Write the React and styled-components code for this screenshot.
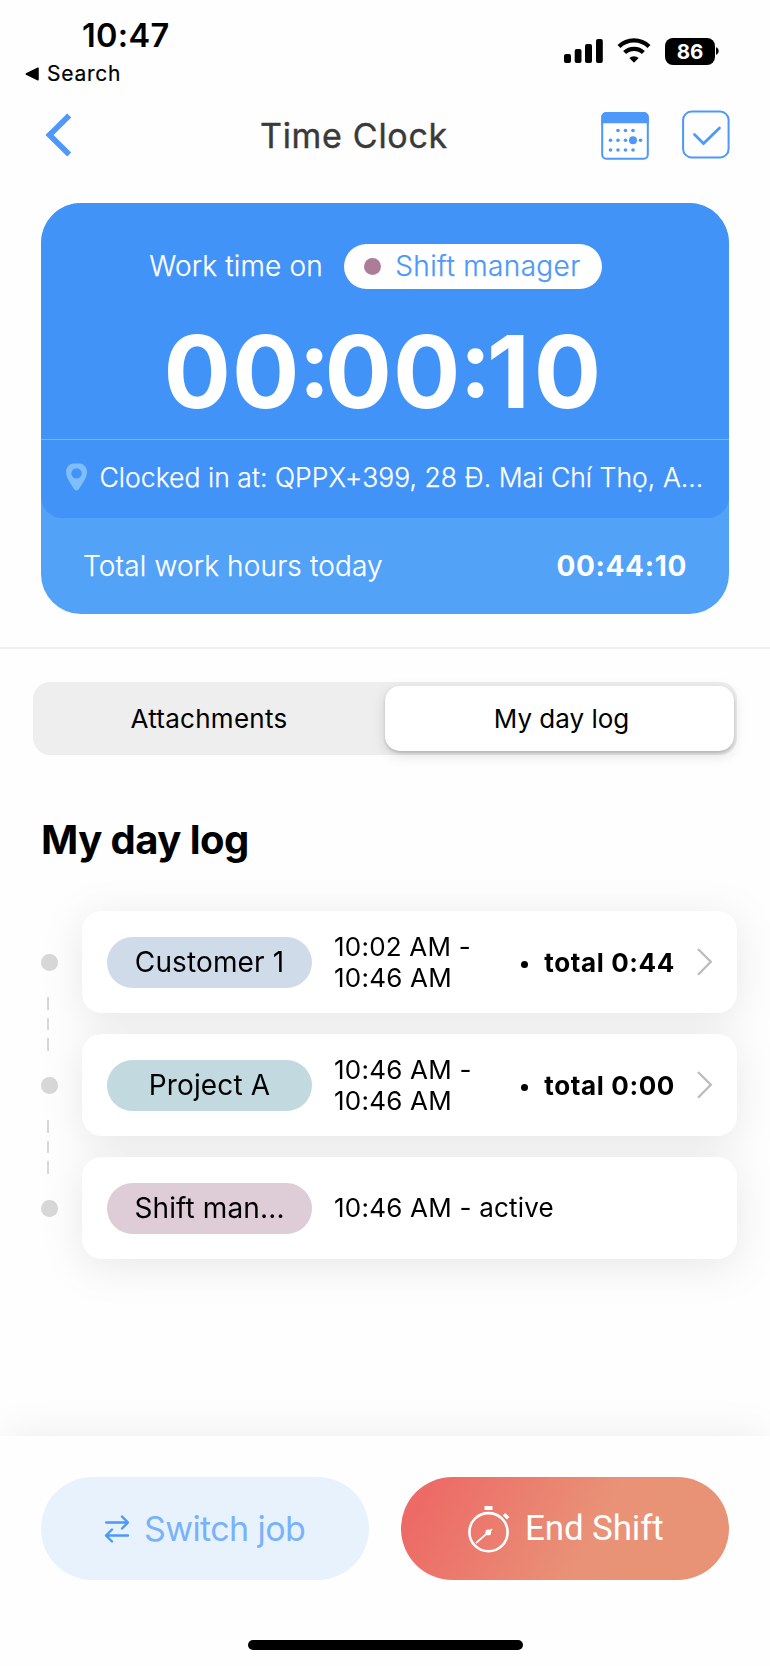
import React from "react";
import styled, { createGlobalStyle } from "styled-components";

const GlobalStyle = createGlobalStyle`
  *, *::before, *::after { box-sizing: border-box; }
  body {
    margin: 0;
    background: #fefefe;
    color: #000;
    font-family: Inter, "Liberation Sans", sans-serif;
    -webkit-font-smoothing: antialiased;
  }
  svg { display: block; flex: none; }
  button { font: inherit; border: 0; padding: 0; background: none; color: inherit; }
`;

const Screen = styled.div`
  width: 770px;
  height: 1666px;
  display: flex;
  flex-direction: column;
  overflow: hidden;
  white-space: nowrap;
`;

const StatusBar = styled.div`
  height: 96px;
  display: flex;
  justify-content: space-between;
  padding: 15px 51px 0 25px;
`;

const StatusLeft = styled.div`
  display: flex;
  flex-direction: column;
`;

const Clock = styled.div`
  padding-left: 57px;
  font-size: 32.5px;
  font-weight: 600;
  line-height: 41px;
  letter-spacing: 0.33px;
`;

const BackToApp = styled.div`
  display: flex;
  align-items: center;
  gap: 8px;
  margin-top: 3px;
  font-size: 21px;
  line-height: 29px;
  letter-spacing: 0.75px;
  -webkit-text-stroke: 0.2px currentColor;
`;

const StatusIcons = styled.div`
  display: flex;
  align-items: center;
  height: 28px;
  margin-top: 22px;
`;

const SignalIcon = styled.svg`
  margin-right: 14px;
`;

const Battery = styled.div`
  display: flex;
  align-items: center;
  margin-left: 14px;
`;

const BatteryLevel = styled.div`
  width: 50px;
  height: 27px;
  border-radius: 8px;
  background: #000;
  color: #fff;
  font-size: 20.5px;
  font-weight: 700;
  line-height: 28px;
  text-align: center;
`;

const Header = styled.header`
  height: 107px;
  padding: 14px 40px 0 45px;
  display: flex;
  align-items: flex-start;
`;

const BackButton = styled.button`
  width: 215px;
  height: 50px;
  display: flex;
  align-items: center;
`;

const Title = styled.h1`
  margin: 0 auto 0 0;
  color: #3a3a3a;
  font-size: 34px;
  font-weight: 400;
  line-height: 51px;
  letter-spacing: 0.7px;
  -webkit-text-stroke: 0.4px currentColor;
`;

const HeaderActions = styled.div`
  display: flex;
  gap: 33px;
`;

const ClockCard = styled.section`
  flex: none;
  margin: 0 41px;
  height: 411px;
  border-radius: 40px;
  overflow: hidden;
  background: #52a2f8;
  color: #fff;
`;

const CurrentShift = styled.div`
  height: 315px;
  border-radius: 0 0 21px 21px;
  background: #4293f7;
`;

const WorkTime = styled.div`
  height: 237px;
  padding-top: 41px;
  display: flex;
  flex-direction: column;
  align-items: center;
  border-bottom: 1px solid #78b4fa;
`;

const WorkLine = styled.div`
  display: flex;
  align-items: center;
  gap: 21px;
  padding-right: 19px;
  font-size: 28px;
  font-weight: 300;
  line-height: 45px;
  letter-spacing: 0.16px;
  -webkit-text-stroke: 0.25px currentColor;
`;

const JobPill = styled.span`
  display: flex;
  align-items: center;
  gap: 14.5px;
  width: 258px;
  height: 45px;
  padding-left: 20px;
  padding-bottom: 1px;
  border-radius: 23px;
  background: #fff;
  color: #4d98f8;
  letter-spacing: 0.34px;
`;

const JobDot = styled.i`
  width: 17px;
  height: 17px;
  border-radius: 50%;
  background: #ad7c98;
`;

const Timer = styled.div`
  margin-top: 22px;
  display: flex;
  align-items: center;
  font-size: 100px;
  font-weight: 700;
  line-height: 122px;
`;

const TimerPair = styled.span`
  display: flex;
  justify-content: center;
  width: ${(p) => (p.$narrow ? "119px" : "135px")};
  letter-spacing: ${(p) => (p.$narrow ? "4px" : "1px")};
`;

const TimerColon = styled.span`
  display: flex;
  justify-content: center;
  width: 26px;
  margin-top: -19px;
  font-size: 94px;
  letter-spacing: -4px;
`;

const Location = styled.div`
  height: 78px;
  display: flex;
  align-items: center;
  padding: 0 0 4px 25px;
  gap: 12.5px;
  font-size: 26.5px;
  font-weight: 300;
  letter-spacing: 0.04px;
  -webkit-text-stroke: 0.25px currentColor;
`;

const TotalToday = styled.div`
  height: 96px;
  display: flex;
  align-items: center;
  justify-content: space-between;
  padding: 0 42px 0 42px;
  font-size: 28px;
  font-weight: 300;
  letter-spacing: 0.15px;
  -webkit-text-stroke: 0.25px currentColor;
`;

const TotalValue = styled.b`
  font-weight: 700;
  letter-spacing: 0.66px;
  -webkit-text-stroke: 0;
`;

const Divider = styled.hr`
  flex: none;
  width: 100%;
  height: 2px;
  margin: 33px 0;
  border: 0;
  background: #f0f0f0;
`;

const Tabs = styled.div`
  flex: none;
  display: flex;
  height: 73px;
  margin: 0 33px;
  padding: 4px 3px 4px 0;
  border-radius: 17px;
  background: #eee;
`;

const Tab = styled.button`
  width: ${(p) => (p.$active ? "349px" : "352px")};
  padding-left: ${(p) => (p.$active ? "4px" : "0")};
  border-radius: 15px;
  font-size: 26px;
  line-height: 65px;
  letter-spacing: ${(p) => (p.$active ? "0" : "0.27px")};
  text-align: center;
  background: ${(p) => (p.$active ? "#fff" : "transparent")};
  box-shadow: ${(p) =>
    p.$active ? "0 2px 3px rgba(0,0,0,.16), 0 4px 14px rgba(0,0,0,.13)" : "none"};
`;

const SectionTitle = styled.h2`
  margin: 60px 0 0 41px;
  font-size: 40px;
  font-weight: 700;
  line-height: 49px;
  letter-spacing: -0.55px;
`;

const DayLog = styled.div`
  display: flex;
  margin: 47px 33px 0 41px;
`;

const Timeline = styled.div`
  width: 41px;
  padding-top: 43px;
`;

const TimelineDot = styled.div`
  width: 16.5px;
  height: 16.5px;
  border-radius: 50%;
  background: #d8d8d8;
`;

const TimelineDashes = styled.div`
  height: 106.5px;
  padding: 26.5px 0 0 6px;
  display: flex;
  flex-direction: column;
  gap: 8px;
`;

const Dash = styled.i`
  width: 2px;
  height: 12.5px;
  background: #d8d8d8;
`;

const LogCards = styled.div`
  flex: 1;
  display: flex;
  flex-direction: column;
  gap: 21px;
  filter: drop-shadow(0 7px 20px rgba(0, 0, 0, 0.09));
`;

const LogCard = styled.article`
  height: 102px;
  padding: 0 24px 0 25px;
  display: flex;
  align-items: center;
  border-radius: 20px;
  background: #fff;
`;

const JobTag = styled.span`
  flex: none;
  width: 205px;
  height: 51px;
  margin-right: 22px;
  border-radius: 26px;
  background: ${(p) => p.$color};
  font-size: 28px;
  line-height: 50px;
  letter-spacing: 0.12px;
  text-align: center;
`;

const LogTime = styled.span`
  flex: 1;
  font-size: 26px;
  line-height: 31.3px;
  letter-spacing: 0.22px;
  white-space: pre-line;
`;

const LogTotal = styled.b`
  display: flex;
  align-items: center;
  gap: 16.5px;
  margin-right: 21px;
  font-size: 26px;
  font-weight: 700;
  letter-spacing: 0.62px;
`;

const Bullet = styled.i`
  width: 7px;
  height: 7px;
  margin-top: 4px;
  border-radius: 50%;
  background: #000;
`;

const BottomBar = styled.footer`
  flex: none;
  height: 230px;
  margin-top: auto;
  padding: 41px 41px 16px;
  display: flex;
  flex-direction: column;
  align-items: center;
  justify-content: space-between;
  background: #fefefe;
  box-shadow: 0 0 44px -4px rgba(0, 0, 0, 0.09);
`;

const Actions = styled.div`
  width: 100%;
  display: flex;
  justify-content: space-between;
`;

const ActionButton = styled.button`
  width: 328px;
  height: 103px;
  border-radius: 52px;
  display: flex;
  align-items: center;
`;

const SwitchButton = styled(ActionButton)`
  padding-left: 63px;
  gap: 14px;
  background: #e8f2fd;
  color: #78b2fb;
  font-size: 34px;
  letter-spacing: -0.6px;
`;

const EndButton = styled(ActionButton)`
  padding-left: 66.5px;
  gap: 15.5px;
  background: linear-gradient(118deg, #ed6a66 8%, #e99277 58%, #e89276 100%);
  color: #fff;
  font-family: Roboto, "Liberation Sans", sans-serif;
  font-size: 35px;
  letter-spacing: -0.15px;
`;

const HomeIndicator = styled.div`
  width: 275px;
  height: 10px;
  border-radius: 5px;
  background: #000;
`;

const entries = [
  { job: "Customer 1", color: "#d0dbea", time: "10:02 AM -\n10:46 AM", total: "total 0:44" },
  { job: "Project A", color: "#c1d9df", time: "10:46 AM -\n10:46 AM", total: "total 0:00" },
  { job: "Shift man...", color: "#deccd7", time: "10:46 AM - active" },
];

const CalendarIcon = () => (
  <svg width="48" height="50" viewBox="0 0 48 50" fill="#4d98f8">
    <rect x="1.2" y="3.2" width="45.6" height="45.6" rx="4" fill="none" stroke="#4d98f8" strokeWidth="2" />
    <path d="M.3 15V7a5 5 0 0 1 5-5h37.400a5 5 0 0 1 5 5v8l-2-1.800H2.300Z" />
    {[17, 24.5, 32].map((x) => <circle key={x} cx={x} cy="20.500" r="1.800" />)}
    {[9.500, 17, 24.500, 39.500].map((x) => <circle key={x} cx={x} cy="30.200" r="1.800" />)}
    <circle cx="32" cy="30.200" r="4" />
    {[9.500, 17, 24.500, 32].map((x) => <circle key={x} cx={x} cy="40" r="1.800" />)}
  </svg>
);

const CheckIcon = () => (
  <svg width="48" height="50" viewBox="0 0 48 50" fill="none" stroke="#4d98f8">
    <rect x="1.100" y="1.600" width="45.500" height="45.800" rx="8.500" strokeWidth="2" />
    <path d="M12.500 24.500 21.500 33.500 37.500 18" strokeWidth="2.700" strokeLinecap="round" />
  </svg>
);

const StopwatchIcon = () => (
  <svg width="42" height="48" viewBox="0 0 42 48" fill="none" stroke="#fff">
    <circle cx="20.500" cy="27.200" r="19.100" strokeWidth="2.600" />
    <path d="M16.500 3h8" strokeWidth="4" />
    <path d="M36 9.300 40.200 13.200" strokeWidth="3.600" />
    <path d="M8 38 20.500 27.200 24 24.200" strokeWidth="1.700" />
    <circle cx="20.300" cy="27.400" r="2.900" fill="#fff" stroke="none" />
  </svg>
);

export default function App() {
  return (
    <Screen>
      <GlobalStyle />
      <StatusBar>
        <StatusLeft>
          <Clock>10:47</Clock>
          <BackToApp>
            <svg width="14" height="14" viewBox="0 0 14 14">
              <path d="M1.300 7 13 1.200V12.800Z" stroke="#000" strokeWidth="1.500" strokeLinejoin="round" />
            </svg>
            Search
          </BackToApp>
        </StatusLeft>
        <StatusIcons>
          <SignalIcon width="39" height="26" viewBox="0 0 39 26">
            <rect x="0" y="16" width="7" height="9" rx="2" />
            <rect x="10.700" y="11" width="6.800" height="14" rx="2" />
            <rect x="21" y="6" width="7" height="19" rx="2" />
            <rect x="32" y="1" width="6.800" height="24" rx="2" />
          </SignalIcon>
          <svg width="34" height="26" viewBox="0 0 34 26" fill="none" stroke="#000">
            <path d="M2 8.400a21.500 21.500 0 0 1 30 0" strokeWidth="4.200" />
            <path d="M7.600 14.600a13.500 13.500 0 0 1 18.800 0" strokeWidth="4.200" />
            <path d="M12.400 20a6.600 6.600 0 0 1 9.200 0L17 24.800Z" fill="#000" stroke="none" />
          </svg>
          <Battery>
            <BatteryLevel>86</BatteryLevel>
            <svg width="4" height="10" viewBox="0 0 4 10">
              <path d="M1 1.200C4.600 2.400 4.600 7.600 1 8.800Z" />
            </svg>
          </Battery>
        </StatusIcons>
      </StatusBar>

      <Header>
        <BackButton aria-label="Back">
          <svg width="27" height="44" viewBox="0 0 27 44" fill="none" stroke="#4d98f8" strokeWidth="5.700">
            <path d="M24.200 2.500 4.500 22 24.200 41.500" />
          </svg>
        </BackButton>
        <Title>Time Clock</Title>
        <HeaderActions>
          <CalendarIcon />
          <CheckIcon />
        </HeaderActions>
      </Header>

      <ClockCard>
        <CurrentShift>
          <WorkTime>
            <WorkLine>
              Work time on
              <JobPill>
                <JobDot />
                Shift manager
              </JobPill>
            </WorkLine>
            <Timer>
              <TimerPair>00</TimerPair>
              <TimerColon>:</TimerColon>
              <TimerPair>00</TimerPair>
              <TimerColon>:</TimerColon>
              <TimerPair $narrow>10</TimerPair>
            </Timer>
          </WorkTime>
          <Location>
            <svg width="21" height="28" viewBox="0 0 21 28" fill="#7fbdfb">
              <path fillRule="evenodd" d="M7.500.5h6C18 .8 21 4.500 21 9c0 6-5.500 13-8.500 17.400-1 1.500-3 1.500-4 0C5.500 22 0 15 0 9 0 4.500 3 .8 7.500.5ZM10.500 5.200a5.200 5.200 0 1 0 0 10.400 5.200 5.200 0 0 0 0-10.400Z" />
            </svg>
            Clocked in at: QPPX+399, 28 Đ. Mai Chí Thọ, A...
          </Location>
        </CurrentShift>
        <TotalToday>
          Total work hours today
          <TotalValue>00:44:10</TotalValue>
        </TotalToday>
      </ClockCard>

      <Divider />

      <Tabs>
        <Tab>Attachments</Tab>
        <Tab $active>My day log</Tab>
      </Tabs>

      <SectionTitle>My day log</SectionTitle>

      <DayLog>
        <Timeline>
          {entries.map((entry, i) => (
            <React.Fragment key={entry.job}>
              <TimelineDot />
              {i < entries.length - 1 && (
                <TimelineDashes>
                  <Dash />
                  <Dash />
                  <Dash />
                </TimelineDashes>
              )}
            </React.Fragment>
          ))}
        </Timeline>
        <LogCards>
          {entries.map((entry) => (
            <LogCard key={entry.job}>
              <JobTag $color={entry.color}>{entry.job}</JobTag>
              <LogTime>{entry.time}</LogTime>
              {entry.total && (
                <>
                  <LogTotal>
                    <Bullet />
                    {entry.total}
                  </LogTotal>
                  <svg width="17" height="30" viewBox="0 0 17 30" fill="none" stroke="#bcbcbc" strokeWidth="2.300">
                    <path d="M2 2 14.800 14.800 2 27.800" />
                  </svg>
                </>
              )}
            </LogCard>
          ))}
        </LogCards>
      </DayLog>

      <BottomBar>
        <Actions>
          <SwitchButton>
            <svg width="26" height="28" viewBox="0 0 26 28" fill="none" stroke="#4d98f8" strokeWidth="2.400" strokeLinecap="round" strokeLinejoin="round">
              <path d="M2.200 7.500H23.500M18 1.500l6 6-6 6" />
              <path d="M24 20.500H2.500M8 14.500l-6 6 6 6" />
            </svg>
            Switch job
          </SwitchButton>
          <EndButton>
            <StopwatchIcon />
            End Shift
          </EndButton>
        </Actions>
        <HomeIndicator />
      </BottomBar>
    </Screen>
  );
}
